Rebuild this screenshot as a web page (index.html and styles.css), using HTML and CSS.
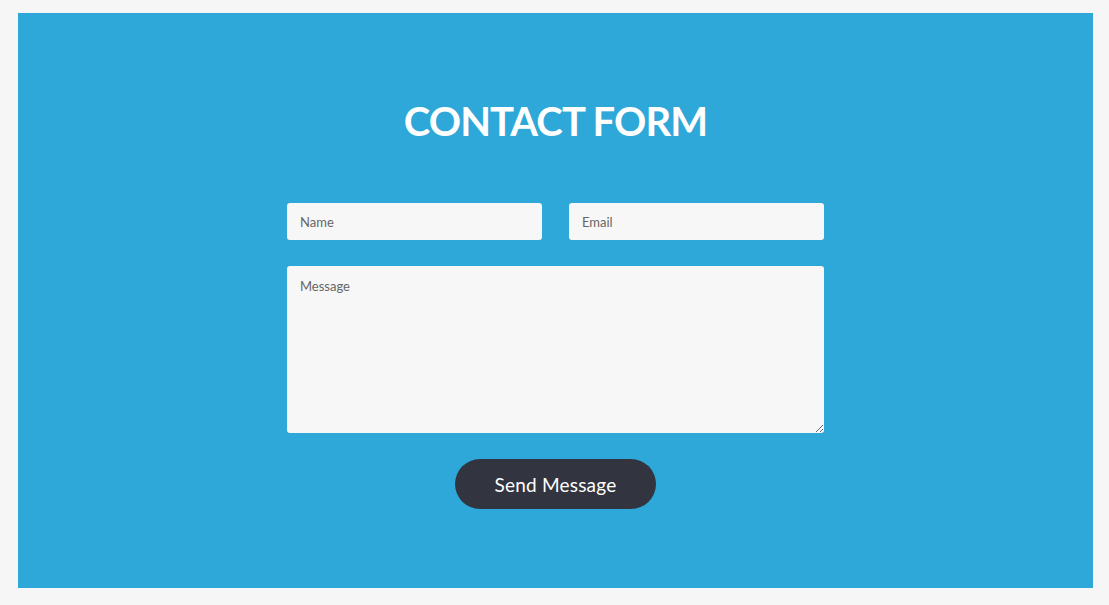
FILE: index.html
```html
<!DOCTYPE html>
<html lang="en">
<head>
<meta charset="utf-8">
<title>Contact Form</title>
<link rel="stylesheet" href="styles.css">
</head>
<body>
  <section class="contact">
    <h1 class="contact-title">CONTACT FORM</h1>
    <form class="contact-form">
      <div class="row">
        <input class="field" type="text" placeholder="Name">
        <input class="field" type="email" placeholder="Email">
      </div>
      <textarea class="field message" placeholder="Message"></textarea>
      <button class="send" type="button">Send Message</button>
    </form>
  </section>
</body>
</html>
```
FILE: styles.css
```css
* {
  box-sizing: border-box;
}

html, body {
  margin: 0;
  height: 100%;
}

body {
  background: #f6f6f6;
  padding: 13px 16px 17px 18px;
  font-family: "Lato", "Open Sans", sans-serif;
}

.contact {
  height: 100%;
  background: #2ea8d9;
  display: flex;
  flex-direction: column;
  align-items: center;
  padding-top: 83px;
}

.contact-title {
  margin: 0;
  color: #fff;
  font-family: "Lato", sans-serif;
  font-weight: 700;
  font-size: 40px;
  line-height: 50px;
  letter-spacing: -0.9px;
}

.contact-form {
  width: 537px;
  margin-top: 57px;
  display: flex;
  flex-direction: column;
  align-items: center;
}

.row {
  width: 100%;
  display: flex;
  gap: 27px;
}

.field {
  width: 100%;
  background: #f7f7f7;
  border: none;
  border-radius: 3px;
  color: #555;
  font-family: "Lato", sans-serif;
  font-size: 13px;
  padding: 0 13px;
  outline: none;
}

.field::placeholder {
  color: #666;
}

.row .field {
  height: 37px;
}

.message {
  margin-top: 26px;
  height: 167px;
  padding-top: 12px;
  resize: vertical;
  display: block;
}

.send {
  margin-top: 26px;
  width: 201px;
  height: 50px;
  border: none;
  border-radius: 25px;
  background: #32353f;
  color: #fff;
  font-family: "Lato", sans-serif;
  font-weight: 400;
  font-size: 19px;
  letter-spacing: 0.2px;
  cursor: pointer;
}
```
